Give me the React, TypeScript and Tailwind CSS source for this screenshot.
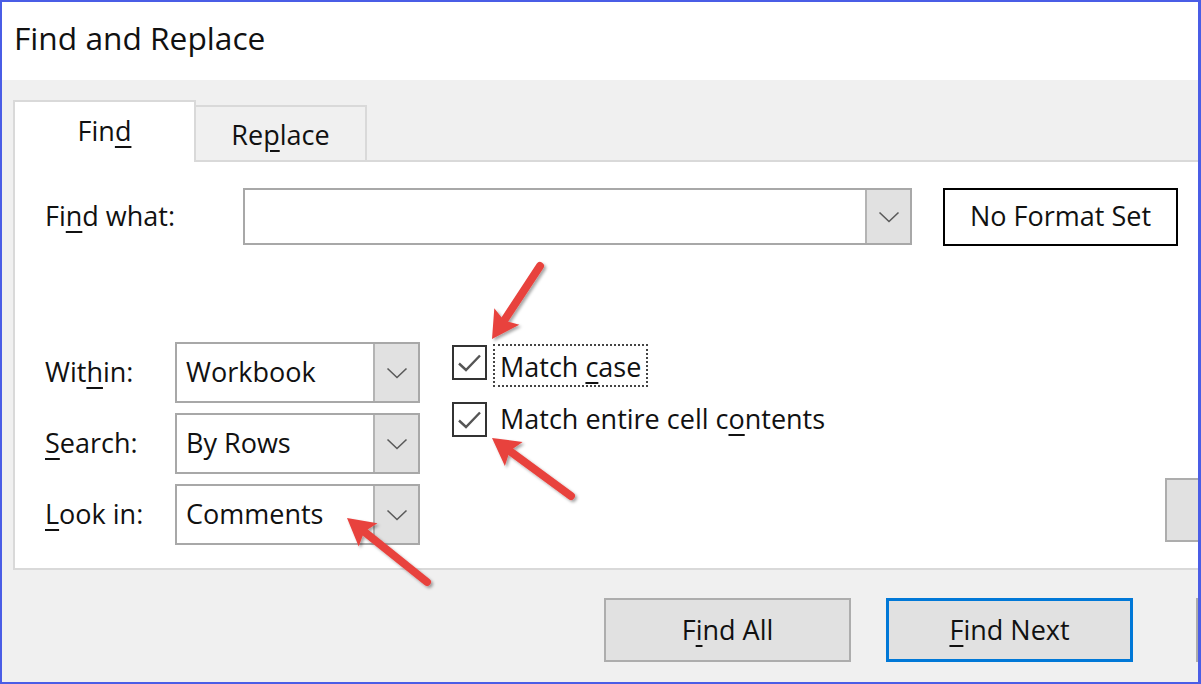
import React from "react";

function Chevron() {
  return (
    <svg width="22" height="12" viewBox="0 0 22 12">
      <path d="M1.5 1.5 L11 10.5 L20.5 1.5" fill="none" stroke="#5a5a5a" strokeWidth="1.6" />
    </svg>
  );
}

function Check() {
  return (
    <svg width="27" height="22" viewBox="0 0 27 22">
      <path d="M3 11.5 L10 18 L24 3.5" fill="none" stroke="#555" strokeWidth="2.4" />
    </svg>
  );
}

function U({ children }: { children: React.ReactNode }) {
  return <span className="underline decoration-[2px] underline-offset-[5px]">{children}</span>;
}

function Arrow({ x1, y1, x2, y2 }: { x1: number; y1: number; x2: number; y2: number }) {
  const dx = x2 - x1;
  const dy = y2 - y1;
  const L = Math.hypot(dx, dy);
  const ux = dx / L;
  const uy = dy / L;
  const nx = -uy;
  const ny = ux;
  const hl = 27;
  const hw = 15;
  const bx = x2 - ux * hl;
  const by = y2 - uy * hl;
  const mx = x2 - ux * (hl - 5);
  const my = y2 - uy * (hl - 5);
  const pts = `${x2},${y2} ${bx + nx * hw},${by + ny * hw} ${mx},${my} ${bx - nx * hw},${by - ny * hw}`;
  return (
    <g filter="url(#shadow)">
      <line x1={x1} y1={y1} x2={mx} y2={my} stroke="#e8433e" strokeWidth={8} strokeLinecap="round" />
      <polygon points={pts} fill="#e8433e" />
    </g>
  );
}

function Select({ value }: { value: string }) {
  return (
    <div className="flex shrink-0 w-[245px] h-[61px] border-2 border-[#a8a8a8]">
      <div className="flex-1 bg-white flex items-center pl-[9px]">{value}</div>
      <div className="w-[45px] bg-[#e1e1e1] border-l-2 border-[#b4b4b4] flex items-center justify-center">
        <Chevron />
      </div>
    </div>
  );
}

export default function App() {
  return (
    <div className="relative w-[1201px] h-[684px] overflow-hidden bg-[#f0f0f0] border-t-2 border-l-2 border-b-2 border-r-[3px] border-[#4a5de6] flex flex-col font-['Open_Sans','Noto_Sans',sans-serif] text-[#111] text-[27px]">
      <div className="h-[78px] shrink-0 bg-white pl-[12px] pt-[20px] text-[31.7px] leading-[31px]">Find and Replace</div>

      <div className="flex-1 pl-[11px]">
        <div className="flex items-start pt-[20px] h-[80px]">
          <div className="relative z-10 shrink-0 w-[183px] h-[62px] bg-white border-2 border-b-0 border-[#d9d9d9] flex items-center justify-center pb-[1px]">
            <span>
              Fin<U>d</U>
            </span>
          </div>
          <div className="mt-[5px] shrink-0 w-[171px] h-[55px] bg-[#f0f0f0] border-t-2 border-r-2 border-[#d9d9d9] flex items-center justify-center pt-[4px]">
            <span>
              Re<U>p</U>lace
            </span>
          </div>
        </div>

        <div className="h-[410px] w-[1300px] border-2 border-[#d9d9d9] bg-white">
          <div className="flex items-center mt-[26px] h-[57px] pl-[30px]">
            <div className="w-[198px] shrink-0">
              <span>
                Fi<U>n</U>d what:
              </span>
            </div>
            <div className="flex shrink-0 w-[669px] h-[57px] border-2 border-[#a8a8a8]">
              <div className="flex-1 bg-white" />
              <div className="w-[45px] bg-[#e1e1e1] border-l-2 border-[#b4b4b4] flex items-center justify-center">
                <Chevron />
              </div>
            </div>
            <div className="ml-[31px] shrink-0 w-[235px] h-[58px] border-2 border-black flex items-center justify-center">
              No Format Set
            </div>
          </div>

          <div className="flex mt-[97px] w-[1250px] pl-[30px]">
            <div className="flex flex-col gap-[10px] shrink-0">
              <div className="flex items-center h-[61px]">
                <div className="w-[130px] shrink-0">
                  <span>
                    Wit<U>h</U>in:
                  </span>
                </div>
                <Select value="Workbook" />
              </div>
              <div className="flex items-center h-[61px]">
                <div className="w-[130px] shrink-0">
                  <span>
                    <U>S</U>earch:
                  </span>
                </div>
                <Select value="By Rows" />
              </div>
              <div className="flex items-center h-[61px]">
                <div className="w-[130px] shrink-0">
                  <span>
                    <U>L</U>ook in:
                  </span>
                </div>
                <Select value="Comments" />
              </div>
            </div>

            <div className="ml-[32px] pt-[3px] flex flex-col shrink-0">
              <div className="flex items-start h-[57px]">
                <div className="w-[35px] h-[35px] shrink-0 border-2 border-[#333] flex items-center justify-center">
                  <Check />
                </div>
                <div className="ml-[6px] -mt-[1px] h-[43px] px-[5px] pt-[3px] border-2 border-dotted border-[#444] flex items-center">
                  <span>
                    Match <U>c</U>ase
                  </span>
                </div>
              </div>
              <div className="flex items-start">
                <div className="w-[35px] h-[35px] shrink-0 border-2 border-[#333] flex items-center justify-center">
                  <Check />
                </div>
                <div className="ml-[13px] h-[35px] flex items-center">
                  <span>
                    Match entire cell c<U>o</U>ntents
                  </span>
                </div>
              </div>
            </div>

            <div className="ml-auto self-end mb-[3px] shrink-0 w-[100px] h-[64px] bg-[#e1e1e1] border-2 border-[#adadad]" />
          </div>
        </div>

        <div className="flex mt-[28px] w-[1400px]">
          <div className="ml-[591px] shrink-0 w-[247px] h-[64px] bg-[#e1e1e1] border-2 border-[#adadad] flex items-center justify-center">
            <span>
              F<U>i</U>nd All
            </span>
          </div>
          <div className="ml-[35px] shrink-0 w-[247px] h-[64px] bg-[#e1e1e1] border-[3px] border-[#0078d7] flex items-center justify-center">
            <span>
              <U>F</U>ind Next
            </span>
          </div>
          <div className="ml-[63px] shrink-0 w-[100px] h-[64px] bg-[#e1e1e1] border-2 border-[#adadad]" />
        </div>
      </div>

      <svg className="absolute left-[-2px] top-[-2px] w-[1201px] h-[684px] pointer-events-none" viewBox="0 0 1201 684">
        <defs>
          <filter id="shadow" x="-20%" y="-20%" width="140%" height="140%">
            <feDropShadow dx="2" dy="2" stdDeviation="1.5" floodColor="#000" floodOpacity="0.35" />
          </filter>
        </defs>
        <Arrow x1={540} y1={266} x2={492} y2={339} />
        <Arrow x1={571} y1={496} x2={492} y2={438} />
        <Arrow x1={427} y1={582} x2={347} y2={518} />
      </svg>
    </div>
  );
}
